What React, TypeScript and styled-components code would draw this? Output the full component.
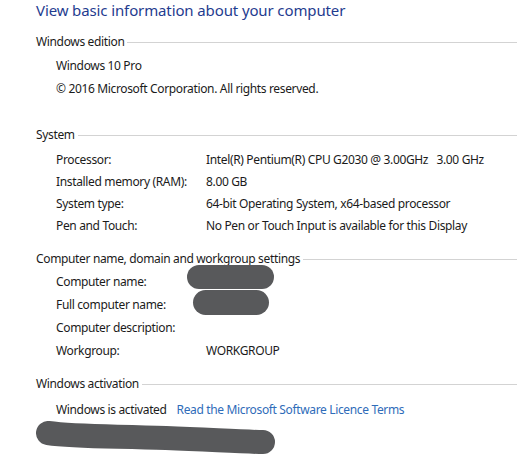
import React from 'react';
import styled, { createGlobalStyle } from 'styled-components';

const GlobalStyle = createGlobalStyle`
  html, body {
    margin: 0;
    padding: 0;
    background: #ffffff;
  }
  body {
    font-family: 'Noto Sans', 'Liberation Sans', Arial, sans-serif;
    color: #1b1b1b;
    overflow: hidden;
  }
`;

const Page = styled.div`
  width: 517px;
  height: 464px;
  padding-left: 36px;
  box-sizing: border-box;
`;

const Title = styled.h1`
  margin: 0;
  font-size: 15px;
  font-weight: 400;
  line-height: 20px;
  letter-spacing: -0.12px;
  color: #1f3c8f;
`;

const Section = styled.section<{ $gap: number }>`
  margin-top: ${(p) => p.$gap}px;
`;

const Header = styled.div`
  display: flex;
  align-items: center;
  height: 16px;
  font-size: 12px;
  letter-spacing: -0.35px;
`;

const HeaderRule = styled.div`
  flex: 1;
  height: 1px;
  margin: 2px 0 0 3px;
  background: #d3d3d3;
`;

const Rows = styled.div<{ $pad: number; $row: number; $cols?: string }>`
  display: grid;
  grid-template-columns: ${(p) => p.$cols ?? '150px 1fr'};
  grid-auto-rows: ${(p) => p.$row}px;
  padding: ${(p) => p.$pad}px 0 0 20px;
  font-size: 12px;
  letter-spacing: -0.35px;
  align-items: center;
`;

const Label = styled.div`
  white-space: nowrap;
`;

const Value = styled.div`
  position: relative;
  white-space: pre;
`;

const Redaction = styled.span<{ $left: number; $top: number; $w: number; $h: number }>`
  position: absolute;
  left: ${(p) => p.$left}px;
  top: ${(p) => p.$top}px;
  width: ${(p) => p.$w}px;
  height: ${(p) => p.$h}px;
  border-radius: ${(p) => p.$h / 2}px;
  background: #58595b;
`;

const ActivationRow = styled.div`
  display: flex;
  align-items: center;
  height: 23px;
  padding: 7px 0 0 20px;
  font-size: 12px;
  letter-spacing: -0.35px;
  white-space: nowrap;
`;

const Link = styled.a`
  margin-left: 10px;
  color: #2f6cb9;
  text-decoration: none;
`;

const Scribble = styled.svg`
  display: block;
  margin-top: 0;
`;

const system = [
  ['Processor:', 'Intel(R) Pentium(R) CPU G2030 @ 3.00GHz   3.00 GHz'],
  ['Installed memory (RAM):', '8.00 GB'],
  ['System type:', '64-bit Operating System, x64-based processor'],
  ['Pen and Touch:', 'No Pen or Touch Input is available for this Display'],
];

function SectionHeader ({ children }: { children: React.ReactNode }) {
  return (
    <Header>
      <span>{children}</span>
      <HeaderRule />
    </Header>
  );
}

export default function App () {
  return (
    <Page>
      <GlobalStyle />
      <Title>View basic information about your computer</Title>

      <Section $gap={13}>
        <SectionHeader>Windows edition</SectionHeader>
        <Rows $cols='1fr' $pad={5} $row={23}>
          <Label>Windows 10 Pro</Label>
          <Label>© 2016 Microsoft Corporation. All rights reserved.</Label>
        </Rows>
      </Section>

      <Section $gap={26}>
        <SectionHeader>System</SectionHeader>
        <Rows $pad={6} $row={22}>
          {system.map(([k, v]) => (
            <React.Fragment key={k}>
              <Label>{k}</Label>
              <Value>{v}</Value>
            </React.Fragment>
          ))}
        </Rows>
      </Section>

      <Section $gap={14}>
        <SectionHeader>Computer name, domain and workgroup settings</SectionHeader>
        <Rows $pad={4} $row={23}>
          <Label>Computer name:</Label>
          <Value>
            <Redaction $left={-19} $top={-8} $w={87} $h={24} />
            {' '}
          </Value>
          <Label>Full computer name:</Label>
          <Value>
            <Redaction $left={-13} $top={-6} $w={76} $h={25} />
            {' '}
          </Value>
          <Label>Computer description:</Label>
          <Value />
          <Label>Workgroup:</Label>
          <Value>WORKGROUP</Value>
        </Rows>
      </Section>

      <Section $gap={13}>
        <SectionHeader>Windows activation</SectionHeader>
        <ActivationRow>
          Windows is activated
          <Link href='#'>Read the Microsoft Software Licence Terms</Link>
        </ActivationRow>
        <Scribble width='250' height='36' viewBox='0 0 250 36'>
          <path
            d='M12 12 C 40 16, 80 15, 130 17 S 210 21, 227 21'
            fill='none'
            stroke='#58595b'
            strokeLinecap='round'
            strokeWidth='24'
          />
        </Scribble>
      </Section>
    </Page>
  );
}
